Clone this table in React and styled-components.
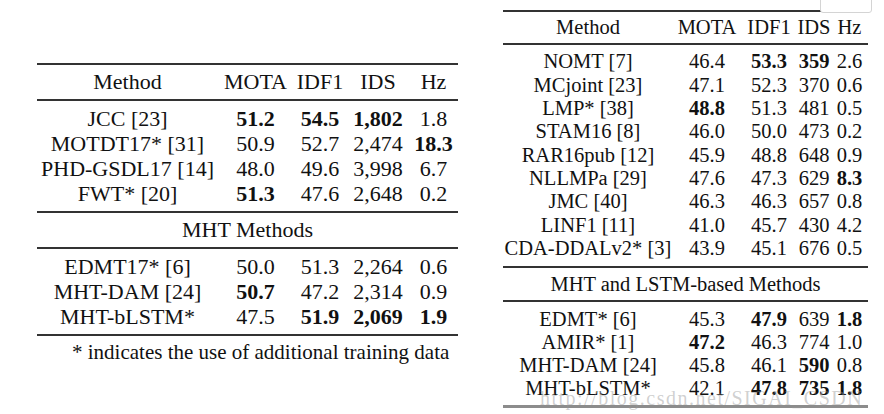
import styled, { createGlobalStyle } from 'styled-components';

const GlobalStyle = createGlobalStyle`
  html, body {
    margin: 0;
    padding: 0;
    background: #ffffff;
  }
  body {
    width: 884px;
    height: 414px;
    overflow: hidden;
    font-family: "Liberation Serif", "DejaVu Serif", serif;
    color: #111111;
  }
`;

const leftRows = [
  ['JCC [23]', ['51.2', true], ['54.5', true], ['1,802', true], ['1.8']],
  ['MOTDT17* [31]', ['50.9'], ['52.7'], ['2,474'], ['18.3', true]],
  ['PHD-GSDL17 [14]', ['48.0'], ['49.6'], ['3,998'], ['6.7']],
  ['FWT* [20]', ['51.3', true], ['47.6'], ['2,648'], ['0.2']],
];

const leftMht = [
  ['EDMT17* [6]', ['50.0'], ['51.3'], ['2,264'], ['0.6']],
  ['MHT-DAM [24]', ['50.7', true], ['47.2'], ['2,314'], ['0.9']],
  ['MHT-bLSTM*', ['47.5'], ['51.9', true], ['2,069', true], ['1.9', true]],
];

const rightRows = [
  ['NOMT [7]', ['46.4'], ['53.3', true], ['359', true], ['2.6']],
  ['MCjoint [23]', ['47.1'], ['52.3'], ['370'], ['0.6']],
  ['LMP* [38]', ['48.8', true], ['51.3'], ['481'], ['0.5']],
  ['STAM16 [8]', ['46.0'], ['50.0'], ['473'], ['0.2']],
  ['RAR16pub [12]', ['45.9'], ['48.8'], ['648'], ['0.9']],
  ['NLLMPa [29]', ['47.6'], ['47.3'], ['629'], ['8.3', true]],
  ['JMC [40]', ['46.3'], ['46.3'], ['657'], ['0.8']],
  ['LINF1 [11]', ['41.0'], ['45.7'], ['430'], ['4.2']],
  ['CDA-DDALv2* [3]', ['43.9'], ['45.1'], ['676'], ['0.5']],
];

const rightMht = [
  ['EDMT* [6]', ['45.3'], ['47.9', true], ['639'], ['1.8', true]],
  ['AMIR* [1]', ['47.2', true], ['46.3'], ['774'], ['1.0']],
  ['MHT-DAM [24]', ['45.8'], ['46.1'], ['590', true], ['0.8']],
  ['MHT-bLSTM*', ['42.1'], ['47.8', true], ['735', true], ['1.8', true]],
];

const headers = ['Method', 'MOTA', 'IDF1', 'IDS', 'Hz'];

const LEFT_COLS = '181px 75px 54px 62px 49px';
const RIGHT_COLS = '170px 68px 56px 34px 37px';

function Rows({ rows, cols, height }) {
  return rows.map(([name, ...vals]) => (
    <Row key={name} $cols={cols} $h={height}>
      <Cell>{name}</Cell>
      {vals.map(([v, bold], i) => (
        <Cell key={i} $bold={bold}>{v}</Cell>
      ))}
    </Row>
  ));
}

function Header({ cols, height }) {
  return (
    <Row $cols={cols} $h={height}>
      {headers.map((h) => (
        <Cell key={h}>{h}</Cell>
      ))}
    </Row>
  );
}

export default function App() {
  return (
    <>
      <GlobalStyle />
      <Page>
        <Table $width={421} $size={22} $top={63}>
          <Rule />
          <Header cols={LEFT_COLS} height={34} />
          <Rule />
          <Body $pad="5px 0 5px">
            <Rows rows={leftRows} cols={LEFT_COLS} height={25} />
          </Body>
          <Rule />
          <Caption $h={34}>MHT Methods</Caption>
          <Rule />
          <Body $pad="5px 0 5px">
            <Rows rows={leftMht} cols={LEFT_COLS} height={25} />
          </Body>
          <Rule />
          <Note>* indicates the use of additional training data</Note>
        </Table>

        <Table $width={365} $size={20.5} $top={10}>
          <Rule />
          <Header cols={RIGHT_COLS} height={31} />
          <Rule />
          <Body $pad="5px 0 6px">
            <Rows rows={rightRows} cols={RIGHT_COLS} height={23.35} />
          </Body>
          <Rule />
          <Caption $h={32}>MHT and LSTM-based Methods</Caption>
          <Rule />
          <Body $pad="5.5px 0 5.5px">
            <Rows rows={rightMht} cols={RIGHT_COLS} height={23} />
          </Body>
          <Rule $tone="#8c8c8c" $thick={3} />
          <Watermark>http://blog.csdn.net/SIGAI_CSDN</Watermark>
        </Table>

        <CornerTab />
      </Page>
    </>
  );
}

const Page = styled.div`
  position: relative;
  display: flex;
  align-items: flex-start;
  gap: 45px;
  padding-left: 37px;
  width: 884px;
  height: 414px;
  box-sizing: border-box;
`;

const Table = styled.div`
  position: relative;
  flex: none;
  width: ${(p) => p.$width}px;
  margin-top: ${(p) => p.$top}px;
  font-size: ${(p) => p.$size}px;
  line-height: 1;
`;

const Rule = styled.div`
  height: ${(p) => p.$thick || 2}px;
  background: ${(p) => p.$tone || '#333333'};
`;

const Body = styled.div`
  padding: ${(p) => p.$pad};
`;

const Row = styled.div`
  display: grid;
  grid-template-columns: ${(p) => p.$cols};
  height: ${(p) => p.$h}px;
  align-items: center;
`;

const Cell = styled.span`
  display: flex;
  justify-content: center;
  white-space: nowrap;
  font-weight: ${(p) => (p.$bold ? 700 : 400)};
`;

const Caption = styled.div`
  height: ${(p) => p.$h}px;
  display: flex;
  align-items: center;
  justify-content: center;
`;

const Note = styled.div`
  height: 32px;
  display: flex;
  align-items: center;
  padding-left: 35px;
  font-size: 21px;
  white-space: nowrap;
`;

const Watermark = styled.div`
  position: absolute;
  left: 37px;
  top: 378px;
  font-size: 20px;
  letter-spacing: 1.5px;
  color: rgba(150, 150, 150, 0.45);
  white-space: nowrap;
  pointer-events: none;
`;

const CornerTab = styled.div`
  position: absolute;
  left: 820px;
  top: -1px;
  width: 50px;
  height: 12px;
  border: 1px solid #d4d4d4;
  border-radius: 0 0 3px 3px;
  background: #ffffff;
`;
